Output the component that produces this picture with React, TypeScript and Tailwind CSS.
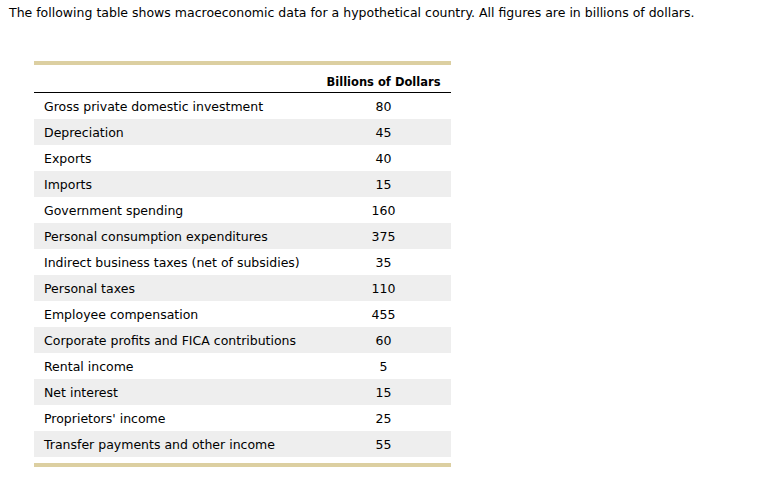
import React from 'react';

const rows: [string, string][] = [
  ['Gross private domestic investment', '80'],
  ['Depreciation', '45'],
  ['Exports', '40'],
  ['Imports', '15'],
  ['Government spending', '160'],
  ['Personal consumption expenditures', '375'],
  ['Indirect business taxes (net of subsidies)', '35'],
  ['Personal taxes', '110'],
  ['Employee compensation', '455'],
  ['Corporate profits and FICA contributions', '60'],
  ['Rental income', '5'],
  ['Net interest', '15'],
  ["Proprietors' income", '25'],
  ['Transfer payments and other income', '55'],
];

export default function App() {
  return (
    <div className="w-[761px] h-[487px] bg-white text-black text-[12.5px] font-['DejaVu_Sans',Verdana,sans-serif]">
      <p className="pl-[9px] pt-[5px] leading-4">
        The following table shows macroeconomic data for a hypothetical country. All figures are in billions of dollars.
      </p>
      <div className="ml-[34px] mt-[40px] w-[417px]">
        <div className="h-1 bg-[#dccfa1]" />
        <div className="flex h-7 items-end pb-[2px] border-b border-black leading-4">
          <div className="flex-1" />
          <div className="w-[135px] text-center font-bold text-[11.5px]">Billions of Dollars</div>
        </div>
        {rows.map(([label, value], i) => (
          <div key={label} className={`flex h-[26px] items-center pt-[3px] ${i % 2 === 1 ? 'bg-[#eeeeee]' : 'bg-white'}`}>
            <div className="flex-1 pl-[10px]">{label}</div>
            <div className="w-[135px] text-center">{value}</div>
          </div>
        ))}
        <div className="mt-[6px] h-1 bg-[#dccfa1]" />
      </div>
    </div>
  );
}
